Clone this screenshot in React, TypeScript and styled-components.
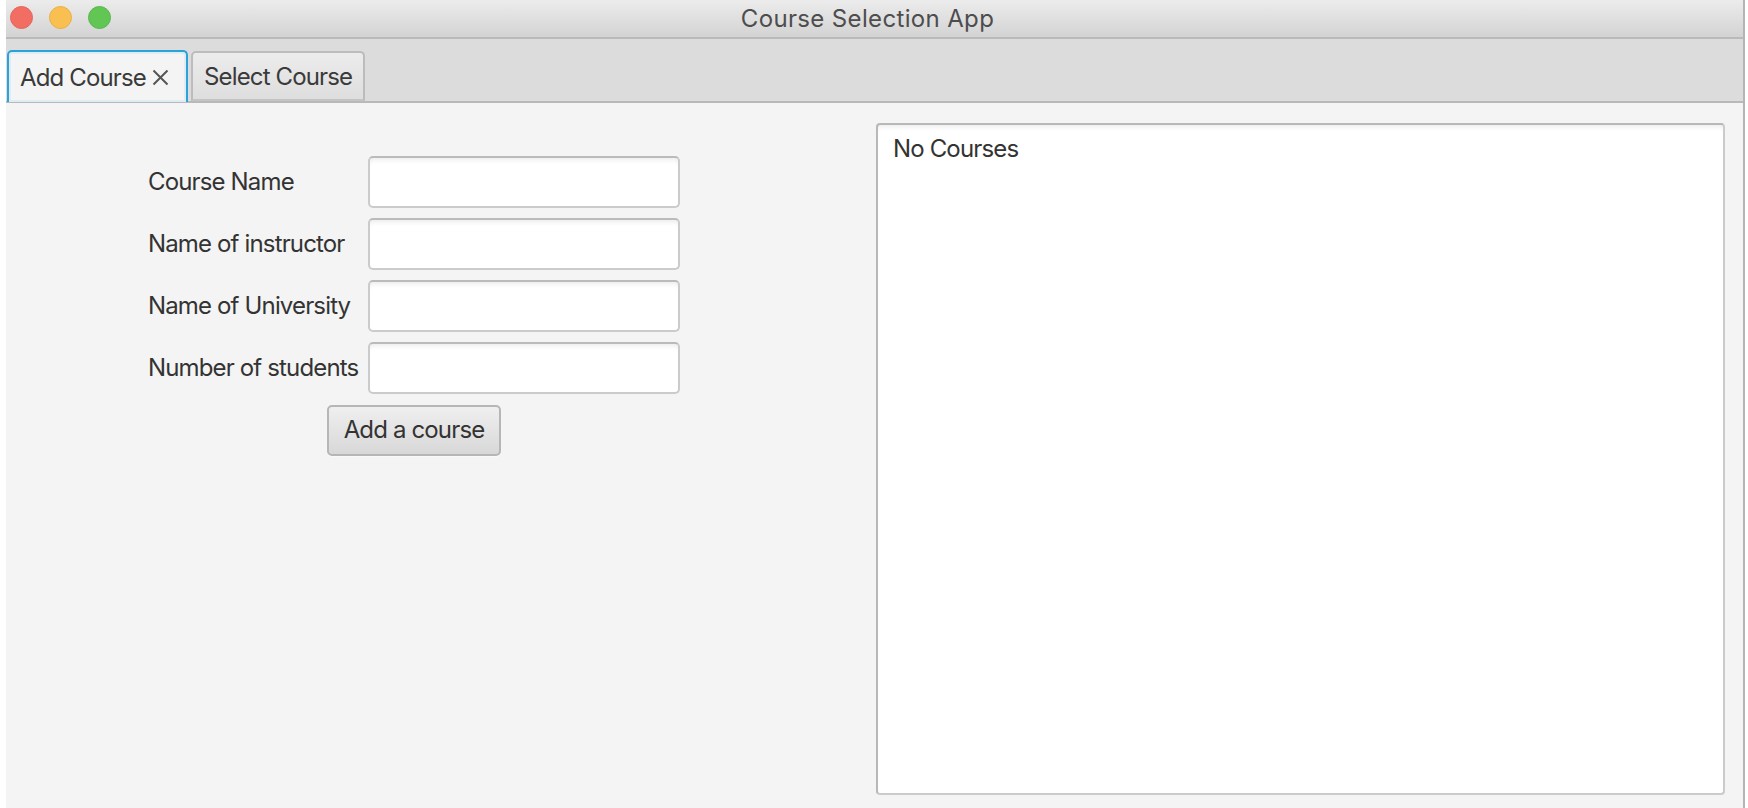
import React from 'react'
import styled, { createGlobalStyle } from 'styled-components'

const Global = createGlobalStyle`
  html, body { margin: 0; height: 100%; background: #fff; }
  #root { height: 100%; }
  * { box-sizing: border-box; }
`

const Page = styled.div`
  height: 808px;
  padding: 0 3px 0 6px;
  font-family: Inter, "Liberation Sans", sans-serif;
  color: #333;
`

const Win = styled.div`
  height: 100%;
  display: flex;
  flex-direction: column;
  background: #f4f4f4;
  border-right: 2px solid #b4b4b4;
`

const TitleBar = styled.div`
  height: 39px;
  flex: none;
  display: flex;
  align-items: center;
  position: relative;
  padding-left: 4px;
  gap: 16px;
  background: linear-gradient(#ececec, #d3d3d3);
  border-bottom: 2px solid #bababa;
`

const Light = styled.span<{ $c: string; $b: string }>`
  width: 23px;
  height: 23px;
  border-radius: 50%;
  background: ${p => p.$c};
  border: 1px solid ${p => p.$b};
  margin-top: -3px;
`

const Title = styled.div`
  position: absolute;
  left: 0;
  right: 14px;
  top: 6px;
  text-align: center;
  font-size: 24px;
  line-height: 26px;
  letter-spacing: 0.35px;
  color: #4d4d4d;
`

const TabBar = styled.div`
  height: 64px;
  flex: none;
  display: flex;
  align-items: flex-end;
  gap: 3px;
  padding: 0 0 0 1px;
  background: #dcdcdc;
  border-bottom: 2px solid #b9b9b9;
`

const Tab = styled.div<{ $active?: boolean; $w: number }>`
  width: ${p => p.$w}px;
  height: ${p => (p.$active ? 52 : 50)}px;
  margin-bottom: ${p => (p.$active ? -1 : 0)}px;
  display: flex;
  align-items: center;
  gap: 6px;
  padding: 1px 0 0 11px;
  font-size: 24px;
  letter-spacing: -0.85px;
  color: #3a3a3a;
  border-radius: 5px 5px 0 0;
  border: 2px solid ${p => (p.$active ? '#2ba3d9' : '#bcbcbc')};
  border-bottom: ${p => (p.$active ? 'none' : '2px solid #c4c4c4')};
  background: ${p => (p.$active ? '#f4f4f4' : 'linear-gradient(#ececec, #dedede)')};
  box-shadow: ${p => (p.$active ? 'inset 0 0 0 2px #deecf4' : 'none')};
`

const Content = styled.div`
  flex: 1;
  min-height: 0;
  display: flex;
  align-items: flex-start;
  justify-content: space-between;
  padding: 20px 18px 13px 142px;
`

const Form = styled.div`
  display: grid;
  grid-template-columns: 220px 312px;
  row-gap: 10px;
  margin-top: 33px;
  align-items: center;
`

const Label = styled.label`
  padding-bottom: 2px;
  font-size: 24px;
  letter-spacing: -0.85px;
  color: #333;
  white-space: nowrap;
`

const Input = styled.input`
  height: 52px;
  width: 100%;
  padding: 0 10px;
  background: #fff;
  border: 2px solid #cbcbcb;
  border-top-color: #bbb;
  border-radius: 5px;
  box-shadow: inset 0 5px 5px -3px #ececec;
  outline: none;
`

const Button = styled.button`
  grid-column: 1 / -1;
  justify-self: center;
  width: 174px;
  height: 51px;
  margin-top: 1px;
  padding: 0 0 2px;
  font-family: inherit;
  font-size: 24px;
  letter-spacing: -0.85px;
  color: #333;
  background: linear-gradient(#efefef, #d8d8d8);
  border: 2px solid #b6b6b6;
  border-radius: 5px;
  box-shadow: 0 1px 1px #fafafa;
`

const ListBox = styled.div`
  width: 849px;
  height: 100%;
  padding: 9px 15px;
  background: #fff;
  border: 2px solid #cbcbcb;
  border-top-color: #b8b8b8;
  border-left-color: #b8b8b8;
  border-radius: 4px;
  font-size: 24px;
  line-height: 30px;
  letter-spacing: -0.85px;
  color: #333;
  box-shadow: inset 0 6px 5px -4px #ececec;
`

const fields = ['Course Name', 'Name of instructor', 'Name of University', 'Number of students']

export default function App() {
  return (
    <Page>
      <Global />
      <Win>
        <TitleBar>
          <Light $c="#f26d62" $b="#e4655b" />
          <Light $c="#f9bf50" $b="#e9b048" />
          <Light $c="#62c655" $b="#59b84d" />
          <Title>Course Selection App</Title>
        </TitleBar>
        <TabBar>
          <Tab $active $w={181}>
            Add Course
            <svg width="17" height="17" viewBox="0 0 17 17" fill="none" stroke="#555" strokeWidth="2">
              <path d="M1.5 1.5l14 14M15.5 1.5l-14 14" />
            </svg>
          </Tab>
          <Tab $w={174}>Select Course</Tab>
        </TabBar>
        <Content>
          <Form>
            {fields.map(f => (
              <React.Fragment key={f}>
                <Label>{f}</Label>
                <Input />
              </React.Fragment>
            ))}
            <Button>Add a course</Button>
          </Form>
          <ListBox>No Courses</ListBox>
        </Content>
      </Win>
    </Page>
  )
}
